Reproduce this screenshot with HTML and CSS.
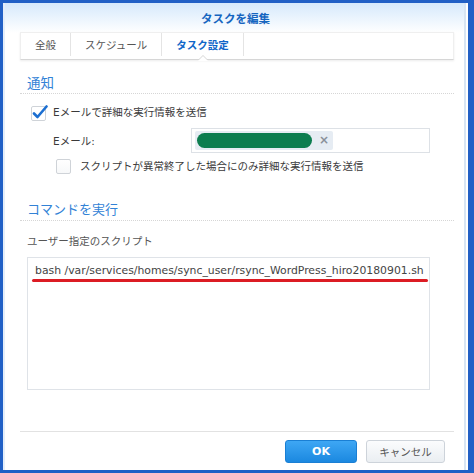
FILE: index.html
```html
<!DOCTYPE html>
<html lang="ja">
<head>
<meta charset="utf-8">
<title>タスクを編集</title>
<link rel="stylesheet" href="styles.css">
</head>
<body>
<div class="dialog">
  <div class="title">タスクを編集</div>
  <div class="body">
    <div class="tabs">
      <div class="tab">全般</div>
      <div class="tab">スケジュール</div>
      <div class="tab active">タスク設定</div>
    </div>

    <div class="section-title first">通知</div>
    <div class="row row-check1">
      <span class="checkbox">
        <svg width="17" height="17" viewBox="0 0 17 17"><rect x="0.5" y="2.5" width="14" height="14" rx="1.5" fill="#fff" stroke="#cfd3d8"/><path d="M3 9.5 L6.5 13 L15.5 2.5" fill="none" stroke="#1c6fd1" stroke-width="2.6" stroke-linecap="round" stroke-linejoin="round"/></svg>
      </span>
      <span class="label">Eメールで詳細な実行情報を送信</span>
    </div>
    <div class="row row-email">
      <span class="email-label">Eメール:</span>
      <div class="input">
        <span class="tag"><span class="pill"></span><span class="x">×</span></span>
      </div>
    </div>
    <div class="row row-check2">
      <span class="box"></span>
      <span class="label">スクリプトが異常終了した場合にのみ詳細な実行情報を送信</span>
    </div>

    <div class="section-title second">コマンドを実行</div>
    <div class="field-label">ユーザー指定のスクリプト</div>
    <div class="textarea">
      <div class="script">bash /var/services/homes/sync_user/rsync_WordPress_hiro20180901.sh</div>
      <div class="redline"></div>
    </div>
  </div>
  <div class="footer">
    <button class="btn primary">OK</button>
    <button class="btn secondary">キャンセル</button>
  </div>
</div>
</body>
</html>
```

FILE: styles.css
```css
* { box-sizing: border-box; }
html, body {
  margin: 0;
  padding: 0;
  height: 473px;
  overflow: hidden;
}
body {
  background: #2160c6;
  font-family: "DejaVu Sans", "Noto Sans CJK JP", sans-serif;
  font-size: 10.5px;
  color: #3a3a3a;
}
.dialog {
  margin: 3px 6px 0 3px;
  height: 467px;
  display: flex;
  flex-direction: column;
  background: linear-gradient(#d6e9fc, #ffffff 30px) no-repeat, #fff;
  box-shadow: inset -2px 0 0 #fff, inset -4px 0 0 #d8e5f3, inset 2px 0 0 #e4eefa;
}
.title {
  height: 29px;
  line-height: 30px;
  text-align: center;
  font-weight: bold;
  font-size: 11.5px;
  color: #1565c0;
  font-family: "Noto Sans CJK JP", sans-serif;
}
.body {
  padding: 0 14px 0 17px;
}
.tabs {
  height: 28px;
  display: flex;
  border: 1px solid #efefef;
  border-bottom: 1px solid #d6d6d6;
  box-shadow: 0 1px 2px rgba(0,0,0,0.08);
}
.tab {
  position: relative;
  height: 23px;
  display: flex;
  align-items: center;
  padding: 0 14px;
  border-right: 1px solid #e4e4e4;
  color: #555;
  font-family: "Noto Sans CJK JP", sans-serif;
}
.tab.active {
  color: #1066c8;
  font-weight: bold;
}
.tab.active::before,
.tab.active::after {
  content: "";
  position: absolute;
  left: 50%;
  margin-left: -5px;
  width: 0;
  height: 0;
  border-left: 5px solid transparent;
  border-right: 5px solid transparent;
}
.tab.active::before {
  bottom: -4px;
  border-bottom: 5px solid #d6d6d6;
}
.tab.active::after {
  bottom: -5px;
  border-bottom: 5px solid #fff;
}
.section-title {
  padding-left: 7px;
  font-size: 13.5px;
  color: #3282d6;
  border-bottom: 1px dotted #d6d6d6;
  font-family: "Noto Sans CJK JP", sans-serif;
}
.section-title.first {
  margin-top: 12px;
  line-height: 21px;
}
.section-title.second {
  margin-top: 24px;
  line-height: 22px;
  font-size: 13px;
}
.row {
  display: flex;
  align-items: center;
}
.row-check1 {
  margin-top: 10px;
  height: 17px;
  padding-left: 11px;
}
.checkbox {
  width: 17px;
  height: 17px;
  display: block;
}
.checkbox svg { display: block; }
.row-check1 .label {
  margin-left: 5px;
}
.label {
  line-height: 15px;
}
.row-email {
  margin-top: 7px;
  height: 25px;
}
.email-label {
  width: 171px;
  padding-left: 33px;
}
.input {
  width: 239px;
  height: 25px;
  border: 1px solid #dde1e6;
  background: #fff;
  padding: 2px 3px;
}
.tag {
  display: flex;
  align-items: center;
  width: 138px;
  height: 19px;
  background: #e6ecf3;
  border-radius: 2px;
  padding-left: 2px;
}
.pill {
  width: 115px;
  height: 15px;
  border-radius: 8px;
  background: #0c7d4f;
}
.x {
  margin-left: 7px;
  color: #8a9099;
  font-size: 12px;
  font-weight: bold;
  line-height: 15px;
}
.row-check2 {
  margin-top: 6px;
  height: 15px;
  padding-left: 36px;
}
.box {
  width: 15px;
  height: 15px;
  border: 1px solid #cfd3d8;
  border-radius: 2px;
  background: linear-gradient(#ffffff, #f7f8f9);
}
.row-check2 .label {
  margin-left: 9px;
}
.field-label {
  margin-top: 12px;
  padding-left: 7px;
  line-height: 16px;
  color: #555;
}
.textarea {
  margin: 8px 0 0 7px;
  width: 403px;
  height: 133px;
  border: 1px solid #dfe3e8;
  padding: 5px 4px 0 7px;
}
.script {
  font-family: "DejaVu Sans", sans-serif;
  font-size: 10.85px;
  line-height: 16px;
  color: #444;
  white-space: nowrap;
}
.redline {
  height: 3px;
  margin: 0 -3px 0 -3px;
  background: #dc1c24;
  border-radius: 2px;
}
.footer {
  margin: auto 14px 0 17px;
  border-top: 1px solid #e2e2e2;
  display: flex;
  justify-content: flex-end;
  gap: 9px;
  padding: 8px 9px 7px 0;
}
.btn {
  height: 23px;
  margin: 0;
  padding: 0;
  border-radius: 3px;
  font-size: 10.5px;
  cursor: pointer;
}
.btn.primary {
  width: 72px;
  background: linear-gradient(#3ea7f4, #1b88e0);
  border: 1px solid #1a7fd4;
  color: #fff;
  font-weight: bold;
  font-family: "DejaVu Sans", sans-serif;
  font-size: 11px;
}
.btn.secondary {
  width: 79px;
  background: linear-gradient(#fbfcfd, #eaeef2);
  border: 1px solid #cdd3da;
  color: #555;
  font-family: "Noto Sans CJK JP", sans-serif;
}
```
